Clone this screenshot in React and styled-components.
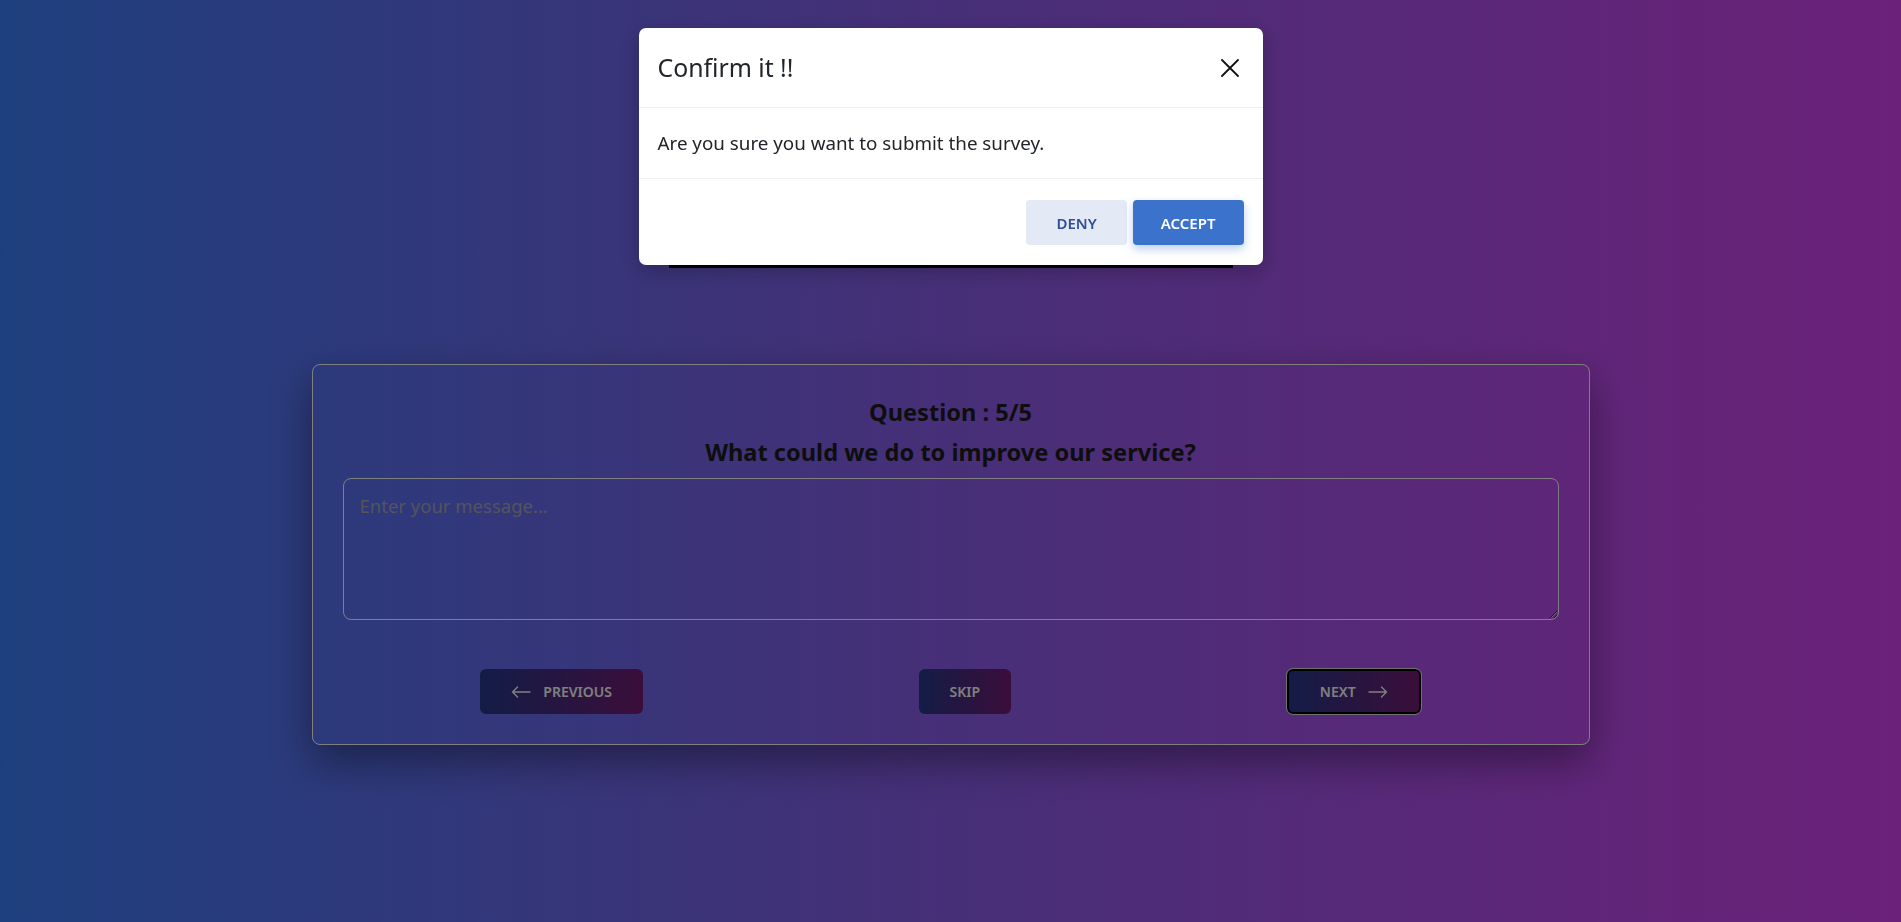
import React from "react";
import styled, { createGlobalStyle } from "styled-components";

const GlobalStyle = createGlobalStyle`
  * {
    box-sizing: border-box;
  }
  body {
    margin: 0;
    font-family: "Noto Sans", "Open Sans", sans-serif;
    color: #000;
  }
`;

const Page = styled.div`
  min-height: 100vh;
  padding-top: 364px;
  background: linear-gradient(to right, #3d7ffc, #8e5ff0 50%, #d743f2);
`;

const Card = styled.section`
  width: 1278px;
  margin: 0 auto;
  padding: 30px;
  border: 1px solid #ffffff;
  border-radius: 8px;
  box-shadow: 0 16px 40px rgba(0, 0, 0, 0.4);
  display: flex;
  flex-direction: column;
  align-items: center;
`;

const Title = styled.h2`
  margin: ${({ $gap }) => $gap || 0} 0 0;
  font-size: 23.6px;
  line-height: 34px;
  font-weight: 700;
  color: #1c1c1c;
  text-align: center;
`;

const MessageBox = styled.textarea`
  width: 100%;
  height: 142px;
  margin-top: 9px;
  padding: 14px 16px;
  border: 1px solid #fff;
  border-radius: 8px;
  background: transparent;
  font-family: inherit;
  font-size: 18.5px;
  line-height: 1.4;
  color: #fff;
  outline: none;

  &::placeholder {
    color: #a8a8b4;
  }
`;

const Actions = styled.div`
  width: 100%;
  margin-top: 49px;
  display: flex;
  justify-content: space-around;
`;

const NavButton = styled.button`
  height: 45px;
  padding: 0 31px;
  display: flex;
  align-items: center;
  gap: 12px;
  border: ${({ $active }) => ($active ? "2px solid #000" : "none")};
  outline: ${({ $active }) => ($active ? "1px solid #e0e0e0" : "none")};
  border-radius: 6px;
  background: linear-gradient(to right, #26398e, #761c74);
  font-family: inherit;
  font-size: 14px;
  font-weight: 600;
  text-transform: uppercase;
  color: #fff;
  cursor: pointer;
`;

const Arrow = ({ dir }) => (
  <svg width="20" height="12" viewBox="0 0 20 12" fill="none" stroke="currentColor" strokeWidth="1.4" strokeLinecap="round" strokeLinejoin="round">
    {dir === "left" ? (
      <path d="M19 6H1.5M6.5 1 1.5 6l5 5" />
    ) : (
      <path d="M1 6h17.5M13.5 1l5 5-5 5" />
    )}
  </svg>
);

const Backdrop = styled.div`
  position: fixed;
  inset: 0;
  background: rgba(0, 0, 0, 0.5);
  display: flex;
  justify-content: center;
  align-items: flex-start;
  padding-top: 28px;
`;

const Dialog = styled.div`
  position: relative;
  width: 624px;
  background: #fff;
  border-radius: 7px;
  box-shadow: 0 6px 20px rgba(0, 0, 0, 0.25);

  &::after {
    content: "";
    position: absolute;
    left: 30px;
    right: 30px;
    bottom: -3px;
    height: 3px;
    background: #000;
    z-index: -1;
  }
`;

const DialogHeader = styled.header`
  display: flex;
  align-items: center;
  justify-content: space-between;
  padding: 20px 20px 20px 19px;
  border-bottom: 1px solid #eef0f2;
`;

const DialogTitle = styled.h3`
  margin: 0;
  font-size: 24.8px;
  line-height: 39px;
  font-weight: 400;
  color: #212529;
`;

const CloseButton = styled.button`
  width: 26px;
  height: 26px;
  padding: 0;
  display: flex;
  align-items: center;
  justify-content: center;
  border: none;
  background: none;
  color: #111;
  cursor: pointer;
`;

const DialogBody = styled.div`
  padding: 20px 19px;
  font-size: 18.8px;
  line-height: 30px;
  color: #212529;
  border-bottom: 1px solid #eef0f2;
`;

const DialogFooter = styled.footer`
  display: flex;
  justify-content: flex-end;
  gap: 6px;
  padding: 21px 19px 20px;
`;

const FooterButton = styled.button`
  height: 45px;
  padding: 0 ${({ $primary }) => ($primary ? "28px" : "30px")};
  border: none;
  border-radius: 4px;
  font-family: inherit;
  font-size: 15px;
  font-weight: 600;
  text-transform: uppercase;
  cursor: pointer;
  color: ${({ $primary }) => ($primary ? "#fff" : "#2f4f98")};
  background: ${({ $primary }) => ($primary ? "#3b72cc" : "#e4eaf5")};
  box-shadow: ${({ $primary }) =>
    $primary ? "0 4px 10px rgba(59, 114, 204, 0.35)" : "none"};
`;

export default function App() {
  return (
    <>
      <GlobalStyle />
      <Page>
        <Card>
          <Title>Question : 5/5</Title>
          <Title $gap="6px">What could we do to improve our service?</Title>
          <MessageBox placeholder="Enter your message..." />
          <Actions>
            <NavButton>
              <Arrow dir="left" />
              Previous
            </NavButton>
            <NavButton>Skip</NavButton>
            <NavButton $active>
              Next
              <Arrow dir="right" />
            </NavButton>
          </Actions>
        </Card>
      </Page>
      <Backdrop>
        <Dialog role="dialog">
          <DialogHeader>
            <DialogTitle>Confirm it !!</DialogTitle>
            <CloseButton aria-label="Close">
              <svg width="18" height="18" viewBox="0 0 18 18" stroke="currentColor" strokeWidth="1.8" strokeLinecap="round">
                <path d="M1 1l16 16M17 1 1 17" />
              </svg>
            </CloseButton>
          </DialogHeader>
          <DialogBody>Are you sure you want to submit the survey.</DialogBody>
          <DialogFooter>
            <FooterButton>Deny</FooterButton>
            <FooterButton $primary>Accept</FooterButton>
          </DialogFooter>
        </Dialog>
      </Backdrop>
    </>
  );
}
